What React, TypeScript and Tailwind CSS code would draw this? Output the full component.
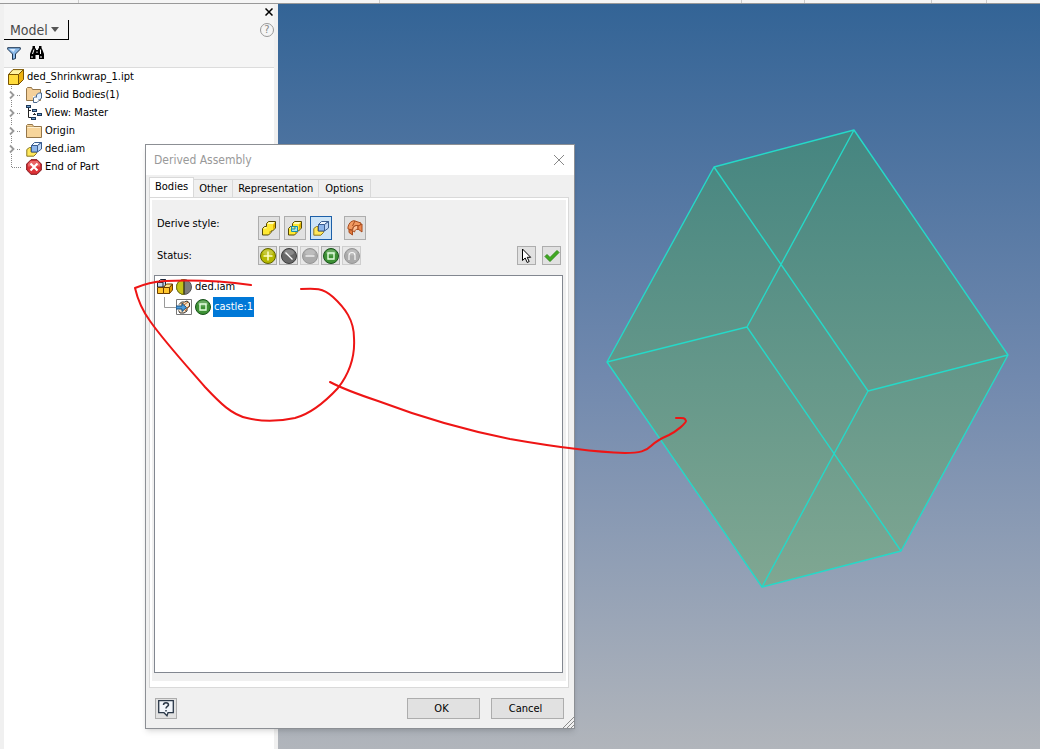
import { useState } from 'react'
import type { ReactNode } from 'react'
import { clsx } from 'clsx'

const TABS = ['Bodies', 'Other', 'Representation', 'Options']

const TREE = [
  { label: 'Solid Bodies(1)', icon: <SolidBodiesIcon />, expandable: true },
  { label: 'View: Master', icon: <ViewIcon />, expandable: true },
  { label: 'Origin', icon: <FolderIcon />, expandable: true },
  { label: 'ded.iam', icon: <DerivedIcon />, expandable: true },
  { label: 'End of Part', icon: <EndIcon />, expandable: false },
]

const DERIVE_STYLES = [
  { label: 'Single solid body, merged seams', icon: <MergedIcon /> },
  { label: 'Single solid body, keep seams', icon: <MergedIcon seams /> },
  { label: 'Keep each solid as a solid body', icon: <DerivedIcon /> },
  { label: 'Single composite feature', icon: <SurfaceIcon /> },
]

const STATUSES = [
  { label: 'Include', kind: 'plus', disabled: false },
  { label: 'Exclude', kind: 'slash', disabled: false },
  { label: 'Subtract', kind: 'minus', disabled: true },
  { label: 'Bounding box', kind: 'box', disabled: false },
  { label: 'Intersect', kind: 'arch', disabled: true },
]

function PartIcon() {
  return (
    <svg width="16" height="16" viewBox="0 0 16 16" stroke="#7a5400" strokeLinejoin="round">
      <path d="M.5 5.500h10v10H.5z" fill="#ffdc3c" />
      <path d="M.5 5.500L5 .6h10.500l-5 4.900z" fill="#fff3a0" />
      <path d="M10.500 5.500l5-4.900v9.900l-5 5z" fill="#eeb210" />
    </svg>
  )
}

function FolderIcon() {
  return (
    <svg width="16" height="16" viewBox="0 0 16 16">
      <path d="M.5 14.500v-12l1-1h5l1 2h8v11z" fill="#f7d59b" stroke="#94764a" />
      <path d="M1.500 4.500h13" stroke="#fff0cf" />
      <path d="M1 3.500h6.500" stroke="#c9a66c" />
    </svg>
  )
}

function SolidBodiesIcon() {
  return (
    <svg width="17" height="16" viewBox="0 0 17 16">
      <path d="M.5 13.500v-12l1-1h4l1 2h8v11z" fill="#f4d09a" stroke="#94764a" />
      <path d="M7 9h4v6.500H7z" fill="#fff" />
      <path d="M10.500 8l2-2h3v5l-2 2h-3z" fill="#dfeeff" stroke="#4a688c" />
      <path d="M10 10H8.500L7.500 11v4.500H11l2-2" fill="#fff" stroke="#4a688c" />
    </svg>
  )
}

function ViewIcon() {
  return (
    <svg width="16" height="16" viewBox="0 0 16 16">
      <path d="M2.500 3v9.500H6M2.500 5.500H5" fill="none" stroke="#222" />
      <path d="M0 0h5v3H0zM6 4h5v3H6zM11 8h5v3h-5zM5 12h5v3H5z" fill="#1e3858" />
      <path d="M1 1h3v1H1zM7 5h3v1H7zM12 9h3v1h-3zM6 13h3v1H6z" fill="#6d9cc9" />
      <path d="M8.500 8v2M7 9.500h3" stroke="#333" />
    </svg>
  )
}

function DerivedIcon() {
  return (
    <svg width="16" height="16" viewBox="0 0 16 16" strokeLinejoin="round">
      <path d="M.8 8.500l2.700-2H5V11h5.500v1.500l-2.700 2.700h-7z" fill="#ffe85c" stroke="#8a7720" />
      <path d="M5.500 4.500h6V11h-6z" fill="#8db6ec" stroke="#3a5d90" />
      <path d="M5.500 4.500l3-3h7l-4 3z" fill="#f1f8ff" stroke="#3a5d90" />
      <path d="M11.500 4.500l4-3V8l-4 3z" fill="#bdd6f6" stroke="#3a5d90" />
    </svg>
  )
}

function EndIcon() {
  return (
    <svg width="16" height="16" viewBox="0 0 16 16">
      <path d="M5 .7h6L15.300 5v6L11 15.300H5L.7 11V5z" fill="#dc3237" stroke="#7c1216" />
      <path d="M4.500 2h7l2.500 3v2.500H2V5z" fill="#f07a7a" opacity=".7" />
      <path d="M4.500 4.500l7 7M11.500 4.500l-7 7" stroke="#fff" strokeWidth="2.200" />
    </svg>
  )
}

function MergedIcon({ seams = false }: { seams?: boolean }) {
  return (
    <svg width="16" height="16" viewBox="0 0 16 16" strokeLinejoin="round">
      <path
        d="M1.500 8.500l2-2h2v-3l2-2h7v6.500l-3 3H10v1.500L7.500 15h-6z"
        fill="#ffe932"
        stroke="#544808"
      />
      <path d="M6.500 4L8 2h5.500L12 4zM2.500 8.500L4 7h1.500v1.500z" fill="#fffbc0" />
      <path d="M12 5l2-2.500V7l-2 2.500zM8 11.500h1.500V12L8 14z" fill="#dfb000" />
      {seams && (
        <path d="M4.500 6.500h6v5h-6zM4.500 9h3.500V6.500" fill="#a9e6ea" stroke="#168faa" />
      )}
    </svg>
  )
}

function SurfaceIcon() {
  return (
    <svg width="16" height="16" viewBox="0 0 16 16" stroke="#a64b1d" strokeLinejoin="round">
      <path d="M1 7c1-4 3-6 6-6.300l7 2.300-1 3.500-4-1C6.500 5.500 5.500 8 5.500 10L1 9z" fill="#f29a62" />
      <path d="M2 9.500l3.500 1V15L2 12.500z" fill="#e47a3d" />
      <path d="M5.500 10.500C6 7 8 5 11 5.500v4c-2-.5-3 .5-3.500 2.500z" fill="#ffc39a" />
      <path d="M11 6l4-2v8l-4-3z" fill="#ee8850" />
      <path d="M8 .9L5.500 6" fill="none" />
    </svg>
  )
}

function StatusIcon({ kind }: { kind: string }) {
  const fill = kind === 'plus' ? '#b5b800' : kind === 'box' ? '#3d9134' : '#686868'
  const edge = kind === 'plus' ? '#5e6000' : kind === 'box' ? '#17501a' : '#3c3c3c'
  return (
    <svg width="16" height="16" viewBox="0 0 16 16" fill="none">
      <circle cx="8" cy="8" r="7.500" fill={fill} stroke={edge} />
      <ellipse cx="8" cy="4.500" rx="5" ry="3" fill="#fff" opacity=".22" />
      {kind === 'plus' && <path d="M8 3.500v9M3.500 8h9" stroke="#ffffc8" strokeWidth="1.500" />}
      {kind === 'slash' && <path d="M4.500 4.500l7 7" stroke="#fff" strokeWidth="1.300" />}
      {kind === 'minus' && <path d="M3.500 8h9" stroke="#fff" strokeWidth="1.300" />}
      {kind === 'box' && <path d="M5 5h6v6H5z" stroke="#e5ffe0" strokeWidth="1.400" />}
      {kind === 'arch' && <path d="M5 12V7.500a3 3 0 016 0V12" stroke="#fff" strokeWidth="1.200" />}
    </svg>
  )
}

function AssemblyIcon() {
  return (
    <svg width="16" height="16" viewBox="0 0 16 16" strokeLinejoin="round">
      <path d="M.5 3.500l3-3h5v6l-2 1.500h-6z" fill="#c7d9ee" stroke="#182438" />
      <path d="M.5 3.500h5.500V8M6 3.500l2.500-3" fill="none" stroke="#182438" />
      <path d="M.5 8.500h6v6h-6zM6.500 8.500h6v6h-6z" fill="#ffc62e" stroke="#6b3d00" />
      <path d="M6.500 8.500l3-3.500h6l-3 3.500z" fill="#ffe58a" stroke="#6b3d00" />
      <path d="M12.500 8.500l3-3.500v6l-3 3.500z" fill="#e29a00" stroke="#6b3d00" />
    </svg>
  )
}

function HalfIcon() {
  return (
    <svg width="16" height="16" viewBox="0 0 16 16">
      <circle cx="8" cy="8" r="7.500" fill="#7c7c7c" stroke="#555" />
      <path d="M8 .5a7.500 7.500 0 000 15z" fill="#c5c318" stroke="#75740a" />
      <path d="M8 1v14" stroke="#222" />
    </svg>
  )
}

function ComponentIcon() {
  return (
    <svg width="16" height="16" viewBox="0 0 16 16" fill="none">
      <path d="M.5.500h15v15H.5z" fill="#fff" stroke="#777" />
      <path d="M3 5.500L5.500 3h3L11 2l2.500 2v3.500L11 9v3l-3 2H4l-1.500-2.500" fill="#f7e2c5" stroke="#35302c" />
      <path d="M8 6l4-3M9 12l4-5M5 5l3-1" stroke="#b86424" />
      <path d="M0 7h6V4.500l4.500 4L6 12.500V10H0z" fill="#4b9cdd" stroke="#174c7c" />
    </svg>
  )
}

function FilterIcon() {
  return (
    <svg width="14" height="13" viewBox="0 0 14 13">
      <path d="M.7.700h12.600v1.500L8.500 7v4.500l-3 1V7L.7 2.200z" fill="#8bb9e8" stroke="#1d3552" />
      <path d="M2.500 2h6L6.500 5z" fill="#d9ebff" />
    </svg>
  )
}

function BinocularsIcon() {
  return (
    <svg width="16" height="14" viewBox="0 0 16 14">
      <path d="M3.500 0H6v2l1 1v1h2V3l1-1V0h2.500v2l1 2 1.500 4v5h-5V9H6.500v4H1V8l1.500-4 1-2z" />
      <path d="M5 3.500L3.500 8M11.500 3.500V8M3 10v2M12 10v2M8 5.500V7" stroke="#fff" />
    </svg>
  )
}

interface ToolButtonProps {
  label: string
  children: ReactNode
  className?: string
  disabled?: boolean
}

function ToolButton({ label, children, className, disabled }: ToolButtonProps) {
  return (
    <button
      type="button"
      aria-label={label}
      disabled={disabled}
      className={clsx(
        'flex shrink-0 items-center justify-center border border-[#adadad] bg-[#e1e1e1]',
        className,
      )}
    >
      {children}
    </button>
  )
}

function ModelPanel() {
  return (
    <aside className="flex w-[278px] shrink-0 flex-col border-x-4 border-[#f0f0f0] bg-white">
      <div className="border-b border-[#dcdcdc] bg-[#f5f5f5] pb-[7px]">
        <div className="flex h-4 justify-end pt-1 pr-px">
          <button type="button" aria-label="Close panel" className="h-2 w-2">
            <svg width="8" height="8" viewBox="0 0 8 8" stroke="#000" strokeWidth="1.500">
              <path d="M.5.500l7 7M7.500.500l-7 7" />
            </svg>
          </button>
        </div>
        <div className="flex items-center justify-between">
          <button
            type="button"
            className="flex h-5 w-[65px] items-center gap-[3px] border-r border-b border-black pl-1.5 text-sm text-[#4a4a4a]"
          >
            Model
            <svg width="8" height="5" viewBox="0 0 8 5" fill="#555">
              <path d="M0 0h8L4 5z" />
            </svg>
          </button>
          <button type="button" aria-label="Help" className="h-3.5 w-3.5 rounded-full border border-[#999] text-[11px] leading-3 text-[#888]">
            ?
          </button>
        </div>
        <div className="flex items-center gap-2 pt-1.5 pl-[3px]">
          <button type="button" aria-label="Filter">
            <FilterIcon />
          </button>
          <button type="button" aria-label="Find">
            <BinocularsIcon />
          </button>
        </div>
      </div>

      <div>
        <div className="flex h-[18px] items-center gap-[3px] pl-1">
          <PartIcon />
          ded_Shrinkwrap_1.ipt
        </div>
        <ul>
          {TREE.map((node) => (
            <li key={node.label} className="flex h-[18px] items-center">
              <svg width="22" height="18" viewBox="0 0 22 18" className="shrink-0" fill="none">
                <path
                  d={node.expandable ? 'M7.500 0v18' : 'M7.500 0v9'}
                  stroke="#888"
                  strokeDasharray="1 1"
                />
                <path d={node.expandable ? 'M13 9.500h4' : 'M8 9.500h9'} stroke="#888" strokeDasharray="1 1" />
                {node.expandable && (
                  <>
                    <path d="M4 4h8v10H4z" fill="#fff" />
                    <path d="M6 5.500L9.500 9 6 12.500" stroke="#999" strokeWidth="1.800" />
                  </>
                )}
              </svg>
              <span className="flex w-[19px] shrink-0">{node.icon}</span>
              {node.label}
            </li>
          ))}
        </ul>
      </div>
    </aside>
  )
}

function Viewport() {
  return (
    <main className="relative min-w-0 flex-1 overflow-hidden bg-linear-to-b from-[#336496] via-[#7189ae] to-[#b1b5bb]">
      <svg className="absolute top-0 left-0" width="762" height="745" viewBox="278 4 762 745">
        <defs>
          <linearGradient id="solid" x1="0" y1="0" x2="0" y2="1">
            <stop offset="0" stopColor="#458580" />
            <stop offset="1" stopColor="#80a792" />
          </linearGradient>
        </defs>
        <path d="M854 130L1008 355 901 551 762 587 607 362 714 167z" fill="url(#solid)" />
        <path
          d="M854 130L1008 355 901 551 762 587 607 362 714 167zM607 362L747 327 854 130M747 327L901 551M714 167L868 391 1008 355M868 391L762 587"
          fill="none"
          stroke="#25d9c8"
          strokeWidth="1.400"
          strokeLinejoin="round"
        />
      </svg>
    </main>
  )
}

function DerivedAssemblyDialog() {
  const [tab, setTab] = useState('Bodies')
  const [derive, setDerive] = useState(2)

  return (
    <section
      role="dialog"
      aria-labelledby="dialog-title"
      className="absolute top-36 left-[145px] w-[430px] border border-[#8c8f94] bg-[#f0f0f0] shadow-md"
    >
      <header className="flex h-[30px] items-center justify-between bg-white pr-2.5 pl-2">
        <h1 id="dialog-title" className="text-xs text-[#999]">
          Derived Assembly
        </h1>
        <button type="button" aria-label="Close">
          <svg width="10" height="10" viewBox="0 0 10 10" stroke="#888">
            <path d="M0 0l10 10M10 0L0 10" />
          </svg>
        </button>
      </header>

      <div className="px-[3px] pt-0.5">
        <div role="tablist" className="flex h-5 items-end">
          {TABS.map((name) => (
            <button
              key={name}
              type="button"
              role="tab"
              aria-selected={tab === name}
              onClick={() => setTab(name)}
              className={clsx(
                'border border-b-0 border-[#d9d9d9]',
                tab === name
                  ? 'h-5 bg-white px-[5px] pb-0.5'
                  : 'h-[18px] border-l-0 bg-[#f0f0f0] px-[5px] last:px-1.5',
                name === 'Representation' && 'px-1.5',
              )}
            >
              {name}
            </button>
          ))}
        </div>

        <div className="mr-0.5 border border-[#d9d9d9] bg-white px-0.5 pt-0.5 pb-1.5">
          <div className="bg-[#f0f0f0] pt-4 pr-[3px] pb-2 pl-0.5">
            <div className="flex h-6 items-center pl-[3px]">
              <span className="w-[101px] pb-2">Derive style:</span>
              <div className="flex gap-1">
                {DERIVE_STYLES.map((style, i) => (
                  <button
                    key={style.label}
                    type="button"
                    aria-label={style.label}
                    onClick={() => setDerive(i)}
                    className={clsx(
                      'flex h-6 w-[22px] items-center justify-center border',
                      derive === i ? 'border-[#1c5fa8] bg-[#cce4f7]' : 'border-[#adadad] bg-[#e1e1e1]',
                      i === 3 && 'ml-2',
                    )}
                  >
                    {style.icon}
                  </button>
                ))}
              </div>
            </div>

            <div className="mt-1.5 flex items-center pr-0.5 pl-[3px]">
              <span className="w-[101px]">Status:</span>
              <div className="flex gap-0.5">
                {STATUSES.map((s) => (
                  <ToolButton
                    key={s.label}
                    label={s.label}
                    disabled={s.disabled}
                    className={clsx('h-[19px] w-[19px]', s.disabled && 'opacity-50')}
                  >
                    <StatusIcon kind={s.kind} />
                  </ToolButton>
                ))}
              </div>
              <div className="ml-auto flex gap-1.5">
                <ToolButton label="Select" className="h-[19px] w-[19px]">
                  <svg width="11" height="16" viewBox="0 0 11 16">
                    <path
                      d="M1.500 1v11.500l2.700-2.500 2 4.500 2-1-2-4.200h3.500z"
                      fill="#fff"
                      stroke="#000"
                    />
                  </svg>
                </ToolButton>
                <ToolButton label="Accept" className="h-[19px] w-[19px]">
                  <svg width="16" height="14" viewBox="0 0 16 14">
                    <path d="M1 7.500l2-2 3 3L13 1.500l2 2-9 9z" fill="#3fa920" stroke="#2f8a18" />
                  </svg>
                </ToolButton>
              </div>
            </div>

            <div className="mt-2.5 h-[398px] border border-[#828790] bg-white pt-px pl-0.5">
              <div className="flex h-5 items-center gap-[3px]">
                <AssemblyIcon />
                <HalfIcon />
                <span>ded.iam</span>
              </div>
              <div className="flex h-5 items-center">
                <svg width="19" height="20" viewBox="0 0 19 20" fill="none" stroke="#999">
                  <path d="M7.500 0v10.500H19" />
                </svg>
                <ComponentIcon />
                <span className="mr-0.5 ml-[3px]">
                  <StatusIcon kind="box" />
                </span>
                <span className="h-5 bg-[#0078d7] px-px leading-5 text-white">castle:1</span>
              </div>
            </div>
          </div>
        </div>
      </div>

      <footer className="flex items-center gap-[11px] pt-2.5 pr-2.5 pb-[9px] pl-[9px]">
        <ToolButton label="Dialog help" className="mr-auto h-[21px] w-[22px]">
          <svg width="16" height="17" viewBox="0 0 16 17">
            <path d="M.7.700h14.600v12H10l-1 3-3-3H.7z" fill="#f2f6fb" stroke="#2b3848" strokeWidth="1.300" />
            <path d="M5.500 5c0-3 5-3 5 0 0 1.500-2.500 1.500-2.500 3.500M8 10v1.500" fill="none" stroke="#2b3848" strokeWidth="1.500" />
          </svg>
        </ToolButton>
        <button type="button" className="h-[21px] w-[73px] border border-[#adadad] bg-[#e1e1e1] pr-1">
          OK
        </button>
        <button type="button" className="h-[21px] w-[73px] border border-[#adadad] bg-[#e1e1e1] pr-1">
          Cancel
        </button>
      </footer>
      <svg className="absolute right-0 bottom-0" width="11" height="11" viewBox="0 0 11 11" stroke="#8a8a8a">
        <path d="M0 11L11 0M4 11l7-7M8 11l3-3" />
      </svg>
    </section>
  )
}

// Freehand red marker over the dialog and the model
function Markup() {
  return (
    <svg
      className="pointer-events-none absolute top-0 left-0"
      width="1040"
      height="749"
      viewBox="0 0 1040 749"
      fill="none"
      stroke="#ee1515"
      strokeWidth="2"
      strokeLinecap="round"
      strokeLinejoin="round"
    >
      <path d="M251 285C222 281 190 280 165 281C150 282 142 285 135 288C138 301 142 310 150 321C164 341 185 364 205 387C220 403 232 415 247 418C262 422 281 421 295 418C310 414 325 402 338 388C352 370 355 354 354 338C354 320 345 308 333 297C323 288 315 288 301 289" />
      <path d="M330 382C345 390 360 395 378 401C415 415 465 430 510 439C550 446 593 452 625 453C640 453 646 451 651 446C656 441 662 438 669 435C677 431 685 424 686 421C685 417 682 418 676 418" />
    </svg>
  )
}

export default function App() {
  return (
    <div className="relative flex min-h-screen flex-col overflow-hidden font-['DejaVu_Sans_Condensed','DejaVu_Sans',sans-serif] text-[11px] leading-4 text-black">
      <div className="flex h-1 border-b border-[#999] bg-[#f5f5f5]">
        <div className="w-[79px] border-r border-[#ccc]" />
        <div className="w-[301px] border-r border-[#ccc]" />
        <div className="w-[362px] border-r border-[#ccc]" />
        <div className="w-[63px] border-r border-[#ccc]" />
        <div className="w-[127px] border-r border-[#ccc]" />
        <div className="w-[55px] border-r border-[#ccc]" />
      </div>
      <div className="flex flex-1">
        <ModelPanel />
        <Viewport />
      </div>
      <DerivedAssemblyDialog />
      <Markup />
    </div>
  )
}
